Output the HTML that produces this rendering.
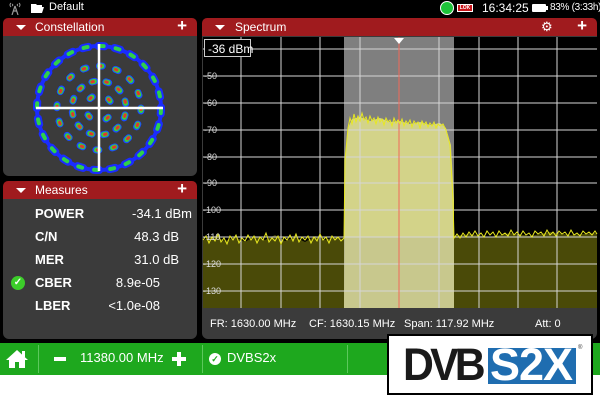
<!DOCTYPE html>
<html><head><meta charset="utf-8"><style>
*{margin:0;padding:0;box-sizing:border-box}
body{width:600px;height:400px;background:#000;position:relative;overflow:hidden;font-family:"Liberation Sans",sans-serif;color:#fff}
.abs{position:absolute;white-space:nowrap}
.hdr{background:#a01b1e;height:18px;border-radius:5px 5px 0 0;font-size:12px;line-height:18px}
.pnl{background:#3b3b3b;border-radius:0 0 6px 6px}
.tri{position:absolute;top:7px;left:13px;width:0;height:0;border-left:5px solid transparent;border-right:5px solid transparent;border-top:5px solid #fff}
.plus{position:absolute;font-weight:bold;font-size:17px;top:-1px}
.m{position:absolute;font-size:13px;font-weight:bold}
.v{position:absolute;font-size:13px;text-align:right}
</style></head><body>
<!-- top bar -->
<svg class="abs" style="left:9px;top:2px" width="12" height="13" viewBox="0 0 12 13"><path d="M6 4 L3 13 M6 4 L9 13 M4 9 H8" stroke="#999" stroke-width="1.2" fill="none"/><path d="M2 1 Q0 3 2 5 M10 1 Q12 3 10 5 M4 2 Q3 3 4 4 M8 2 Q9 3 8 4" stroke="#999" fill="none"/></svg>
<svg class="abs" style="left:31px;top:3px" width="13" height="10" viewBox="0 0 13 10"><path d="M0 1 H5 L6 2 H11 V4 H3 L1 10 H0Z M3 4 H13 L11 10 H1Z" fill="#fff"/></svg>
<div class="abs" style="left:49px;top:1px;font-size:11px">Default</div>
<div class="abs" style="left:440px;top:1px;width:14px;height:14px;border-radius:50%;background:#1ec33a;border:1px solid #fff"></div>
<div class="abs" style="left:457px;top:4px;width:16px;height:8px;background:#c8161b;border:1px solid #fff;font-size:5px;line-height:6px;text-align:center;font-weight:bold">LOK</div>
<div class="abs" style="left:482px;top:1px;font-size:12px">16:34:25</div>
<div class="abs" style="left:532px;top:4px;width:14px;height:8px;background:#fff;border-radius:1px"></div>
<div class="abs" style="left:546px;top:6px;width:2px;height:4px;background:#fff"></div>
<div class="abs" style="left:550px;top:2px;font-size:10px;letter-spacing:-0.3px">83% (3:33h)</div>

<!-- Constellation -->
<div class="abs hdr" style="left:3px;top:18px;width:194px"><div class="tri"></div><span style="position:absolute;left:32px">Constellation</span><span class="plus" style="right:10px">+</span></div>
<div class="abs pnl" style="left:3px;top:36px;width:194px;height:140px"></div>
<svg class="abs" style="left:0;top:0" width="200" height="180">
<g fill="none" stroke-linecap="round">
<circle cx="99" cy="108" r="62" stroke="#1a2cff" stroke-width="4"/>
<circle cx="99" cy="108" r="62" stroke="#1a2cff" stroke-width="8" stroke-dasharray="6 10.2"/>
<circle cx="99" cy="108" r="62" stroke="#2fd04a" stroke-width="4" stroke-dasharray="4 12.2" transform="rotate(1 99 108)"/>
<circle cx="99" cy="108" r="42" stroke="#1a4cff" stroke-width="7" stroke-dasharray="3 13.5"/>
<circle cx="99" cy="108" r="42" stroke="#38d040" stroke-width="5" stroke-dasharray="2.5 14"/>
<circle cx="99" cy="108" r="42" stroke="#e03a2a" stroke-width="3" stroke-dasharray="1.5 15"/>
<circle cx="99" cy="108" r="27" stroke="#1a4cff" stroke-width="7" stroke-dasharray="3 11.1" transform="rotate(15 99 108)"/>
<circle cx="99" cy="108" r="27" stroke="#38d040" stroke-width="5" stroke-dasharray="2.5 11.6" transform="rotate(15 99 108)"/>
<circle cx="99" cy="108" r="27" stroke="#e03a2a" stroke-width="3" stroke-dasharray="1.5 12.6" transform="rotate(15 99 108)"/>
<circle cx="99" cy="108" r="13" stroke="#1a4cff" stroke-width="7" stroke-dasharray="3 17.4" transform="rotate(45 99 108)"/>
<circle cx="99" cy="108" r="13" stroke="#38d040" stroke-width="5" stroke-dasharray="2.5 17.9" transform="rotate(45 99 108)"/>
<circle cx="99" cy="108" r="13" stroke="#e03a2a" stroke-width="3" stroke-dasharray="1.5 18.9" transform="rotate(45 99 108)"/>
</g>
<path d="M36 108 H163 M99 44 V171" stroke="#fff" stroke-width="2.5"/>
</svg>

<!-- Measures -->
<div class="abs hdr" style="left:3px;top:181px;width:194px"><div class="tri"></div><span style="position:absolute;left:32px">Measures</span><span class="plus" style="right:10px">+</span></div>
<div class="abs pnl" style="left:3px;top:199px;width:194px;height:140px"></div>
<div class="m" style="left:35px;top:206px">POWER</div><div class="v" style="right:408px;top:206px">-34.1 dBm</div>
<div class="m" style="left:35px;top:229px">C/N</div><div class="v" style="right:421px;top:229px">48.3 dB</div>
<div class="m" style="left:35px;top:252px">MER</div><div class="v" style="right:421px;top:252px">31.0 dB</div>
<div class="abs" style="left:11px;top:276px;width:14px;height:14px;border-radius:50%;background:#3ccd2a;color:#fff;font-size:10px;line-height:14px;text-align:center;font-weight:bold">✓</div>
<div class="m" style="left:35px;top:275px">CBER</div><div class="v" style="right:440px;top:275px">8.9e-05</div>
<div class="m" style="left:35px;top:298px">LBER</div><div class="v" style="right:440px;top:298px">&lt;1.0e-08</div>

<!-- Spectrum -->
<div class="abs hdr" style="left:202px;top:18px;width:395px"><div class="tri"></div><span style="position:absolute;left:33px">Spectrum</span><span style="position:absolute;left:339px;font-size:13px">⚙</span><span class="plus" style="right:10px">+</span></div>
<div class="abs pnl" style="left:202px;top:36px;width:395px;height:303px"></div>
<svg class="abs" style="left:0;top:0" width="600" height="400">
<rect x="203" y="37" width="394" height="271" fill="#000"/>
<rect x="344" y="37" width="110" height="271" fill="#7f7f7f"/>
<path d="M203 240 L215 236 L225 241 L235 237 L245 242 L255 236 L265 240 L275 235 L285 241 L295 237 L305 242 L315 236 L325 240 L335 237 L344 239 L344 308 L203 308Z" fill="#4a4a08"/>
<path d="M454 236 L470 234 L490 237 L510 233 L530 236 L550 232 L570 235 L597 233 L597 308 L454 308Z" fill="#4a4a08"/>
<path d="M344 308 L345 160 L348 128 L352 119 L360 117 L370 121 L380 118 L390 122 L400 121 L410 124 L420 122 L430 125 L440 123 L446 128 L451 145 L454 200 L454 308Z" fill="#d8d88a" opacity="0.95"/>
<path d="M344 237 L454 237 L454 308 L344 308Z" fill="#bdbd92" opacity="0.5"/>
<g stroke="#d6d6d6" stroke-width="1">
<path d="M203 49 H597 M203 76 H597 M203 103 H597 M203 130 H597 M203 157 H597 M203 183 H597 M203 210 H597 M203 237 H597 M203 264 H597 M203 291 H597"/>
<path d="M241 37 V308 M281 37 V308 M320 37 V308 M360 37 V308 M439 37 V308 M479 37 V308 M518 37 V308 M557 37 V308"/>
</g>
<path d="M399 37 V308" stroke="#f06a5a" stroke-width="1"/>
<path d="M394 38 H404 L399 44Z" fill="#fff"/>
<polyline fill="none" stroke="#e8e820" stroke-width="1" points="203,240 206,236 209,243 212,237 215,241 218,234 221,242 224,238 227,244 230,236 233,240 236,235 239,243 242,238 245,241 248,235 251,240 254,236 257,243 260,237 263,240 266,233 269,242 272,238 275,241 278,236 281,244 284,237 287,240 290,235 293,241 296,234 299,242 302,237 305,240 308,236 311,243 314,237 317,241 320,234 323,240 326,237 329,243 332,236 335,240 338,237 341,241 344,238 345,160 348,128 350,118 352,124 354,114 356,122 358,116 360,121 362,113 364,120 366,117 368,123 370,116 372,121 374,118 376,124 378,117 380,122 382,119 384,125 386,118 388,122 390,120 392,126 394,118 396,123 398,120 400,124 402,119 404,126 406,121 408,124 410,120 412,127 414,121 416,124 418,122 420,128 422,121 424,125 426,122 428,127 430,123 432,126 434,122 436,128 438,124 440,126 443,124 446,130 450,145 453,200 454,238 457,234 460,238 463,233 466,237 469,232 472,236 475,231 478,236 481,233 484,237 487,231 490,235 493,232 496,237 499,231 502,235 505,233 508,236 511,230 514,235 517,232 520,236 523,231 526,235 529,233 532,237 535,231 538,234 541,232 544,236 547,230 550,235 553,232 556,236 559,231 562,234 565,232 568,236 571,230 574,235 577,233 580,236 583,231 586,234 589,232 592,235 595,231 597,234"/>
<g fill="#ddd" font-size="9" font-family="Liberation Sans, sans-serif">
<text x="204" y="79">-50</text><text x="204" y="106">-60</text><text x="204" y="133">-70</text><text x="204" y="160">-80</text><text x="204" y="186">-90</text><text x="203" y="213">-100</text><text x="203" y="240">-110</text><text x="203" y="267">-120</text><text x="203" y="294">-130</text>
</g>
<rect x="204.5" y="39.5" width="46" height="17" fill="#000" stroke="#ccc"/>
<text x="208" y="53" fill="#fff" font-size="12" font-family="Liberation Sans, sans-serif">-36 dBm</text>
</svg>
<div class="abs" style="left:210px;top:318px;font-size:11px">FR: 1630.00 MHz</div>
<div class="abs" style="left:309px;top:318px;font-size:11px">CF: 1630.15 MHz</div>
<div class="abs" style="left:404px;top:318px;font-size:11px">Span: 117.92 MHz</div>
<div class="abs" style="left:535px;top:318px;font-size:11px">Att: 0</div>

<!-- green bar -->
<div class="abs" style="left:0;top:343px;width:600px;height:32px;background:#1ea81e"></div>
<div class="abs" style="left:38px;top:345px;width:1px;height:28px;background:#5cc85c"></div>
<div class="abs" style="left:202px;top:345px;width:1px;height:28px;background:#5cc85c"></div>
<div class="abs" style="left:347px;top:345px;width:1px;height:28px;background:#5cc85c"></div>
<svg class="abs" style="left:5px;top:349px" width="24" height="20" viewBox="0 0 24 20"><path d="M12 1 L1 11 H4 V19 H10 V13 H14 V19 H20 V11 H23Z" fill="#fff"/><rect x="17" y="2" width="3" height="6" fill="#fff"/></svg>
<div class="abs" style="left:54px;top:357px;width:12px;height:4px;background:#fff"></div>
<div class="abs" style="left:80px;top:350px;font-size:13px">11380.00 MHz</div>
<div class="abs" style="left:172px;top:357px;width:14px;height:4px;background:#fff"></div>
<div class="abs" style="left:177px;top:352px;width:4px;height:14px;background:#fff"></div>
<div class="abs" style="left:209px;top:353px;width:12px;height:12px;border-radius:50%;background:#fff;color:#1ea81e;font-size:9px;line-height:12px;text-align:center;font-weight:bold">✓</div>
<div class="abs" style="left:227px;top:350px;font-size:13px">DVBS2x</div>
<div class="abs" style="left:0;top:375px;width:600px;height:25px;background:#fff"></div>

<!-- logo -->
<div class="abs" style="left:387px;top:334px;width:206px;height:61px;background:#fff;border:2px solid #000"></div>
<div class="abs" style="left:403px;top:342px;font-size:45px;line-height:46px;font-weight:bold;color:#1a1a1a;letter-spacing:-4px;transform:scaleX(0.95);transform-origin:left">DVB</div>
<div class="abs" style="left:488px;top:348px;width:88px;height:36px;background:#1f6db0"></div>
<div class="abs" style="left:490px;top:342px;font-size:45px;line-height:46px;font-weight:bold;color:#fff;letter-spacing:-1px">S2X</div>
<div class="abs" style="left:578px;top:345px;font-size:6px;color:#333">®</div>
</body></html>
